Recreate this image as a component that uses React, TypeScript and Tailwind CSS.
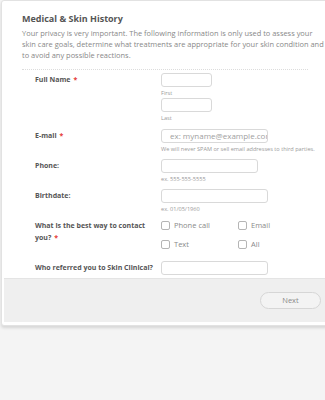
import React from "react";

const Req = () => <span className="text-[#e53935] ml-[3px]">*</span>;

const Field = ({ w, placeholder }: { w: string; placeholder?: string }) => (
  <div
    className={`${w} h-[14px] rounded-[3px] border border-[#d9d9d9] bg-white flex items-center pl-[8px] text-[8px] font-normal text-[#a0a0a0] overflow-hidden whitespace-nowrap`}
  >
    {placeholder}
  </div>
);

const Sub = ({ children }: { children: React.ReactNode }) => (
  <div className="mt-[2px] text-[5.6px] leading-[8px] font-normal text-[#9a9a9a] whitespace-nowrap">{children}</div>
);

const Check = ({ label }: { label: string }) => (
  <div className="flex items-center h-[9px]">
    <span className="w-[9px] h-[9px] rounded-[2px] border border-[#b5b5b5] bg-white" />
    <span className="ml-[4px] text-[7.5px] text-[#8a8a8a] leading-[9px]">{label}</span>
  </div>
);

export default function App() {
  return (
    <div className="min-h-[400px] overflow-hidden bg-[#f4f4f4] font-['Open_Sans',sans-serif]">
      <div className="ml-[1px] w-[328px] bg-white border border-[#e2e2e2] rounded-[3px] shadow-[0_2px_3px_rgba(0,0,0,0.12)] pb-[3px]">
        <div className="px-[20px] pt-[11px]">
          <h2 className="text-[9px] leading-[14px] font-bold text-[#555]">Medical &amp; Skin History</h2>
          <p className="mt-[2px] w-[306px] text-[7.45px] leading-[11px] text-[#888]">
            Your privacy is very important. The following information is only used to assess your skin care goals,
            determine what treatments are appropriate for your skin condition and to avoid any possible reactions.
          </p>
          <div className="mt-[8px] border-t border-dotted border-[#dcdcdc]" />
        </div>

        <div className="pl-[33px] text-[7px] font-bold text-[#555]">
          <div className="flex mt-[3px]">
            <div className="w-[126px] pt-[1px] leading-[12px]">
              Full Name<Req />
            </div>
            <div>
              <Field w="w-[51px]" />
              <Sub>First</Sub>
              <div className="mt-[1px]">
                <Field w="w-[51px]" />
              </div>
              <Sub>Last</Sub>
            </div>
          </div>

          <div className="flex mt-[7px]">
            <div className="w-[126px] pt-[1px] leading-[12px]">
              E-mail<Req />
            </div>
            <div>
              <Field w="w-[107px]" placeholder="ex: myname@example.com" />
              <Sub>We will never SPAM or sell email addresses to third parties.</Sub>
            </div>
          </div>

          <div className="flex mt-[6px]">
            <div className="w-[126px] pt-[1px] leading-[12px]">Phone:</div>
            <div>
              <Field w="w-[97px]" />
              <Sub>ex. 555-555-5555</Sub>
            </div>
          </div>

          <div className="flex mt-[6px]">
            <div className="w-[126px] pt-[1px] leading-[12px]">Birthdate:</div>
            <div>
              <Field w="w-[107px]" />
              <Sub>ex. 01/05/1960</Sub>
            </div>
          </div>

          <div className="flex mt-[7px]">
            <div className="w-[126px] leading-[12px]">
              <div className="w-[118px]">
                What is the best way to contact you?<Req />
              </div>
            </div>
            <div className="grid grid-cols-[77px_60px] gap-y-[10px] pt-[1px] font-normal">
              <Check label="Phone call" />
              <Check label="Email" />
              <Check label="Text" />
              <Check label="All" />
            </div>
          </div>

          <div className="flex items-center mt-[12px]">
            <div className="w-[126px] leading-[12px] whitespace-nowrap">Who referred you to Skin Clinical?</div>
            <Field w="w-[107px]" />
          </div>
        </div>

        <div className="mx-[2px] mt-[3px] h-[44px] bg-[#efefef] border-t border-[#e4e4e4] flex justify-end pt-[13px] pr-[5px]">
          <button className="w-[61px] h-[17px] rounded-full border border-[#d6d6d6] bg-[#f3f3f3] text-[7.5px] text-[#8a8a8a]">
            Next
          </button>
        </div>
      </div>
    </div>
  );
}
